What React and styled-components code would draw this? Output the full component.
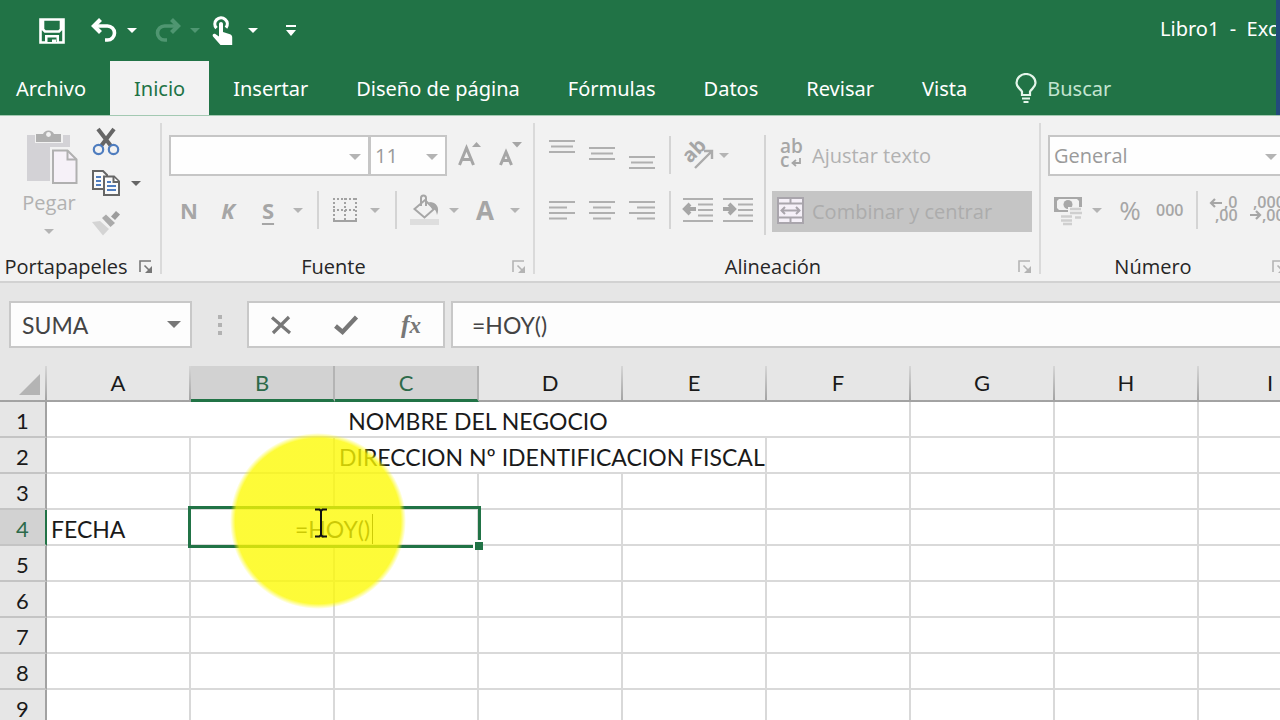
import React, { useState } from 'react';
import styled, { createGlobalStyle } from 'styled-components';

const GlobalStyle = createGlobalStyle`
  * {
    box-sizing: border-box;
  }
  body {
    margin: 0;
    background: #ffffff;
    overflow: hidden;
  }
  button, input, select {
    font-family: inherit;
    font-size: inherit;
    color: inherit;
  }
`;

const Window = styled.div`
  display: flex;
  flex-direction: column;
  height: 100vh;
  overflow: hidden;
  font-family: 'Open Sans', 'Noto Sans', sans-serif;
  font-size: 20px;
  color: #262626;
`;

const Top = styled.header`
  flex: none;
  background: #217346;
  color: #ffffff;
  border-right: 4px solid #234a7c;
  font-family: 'Noto Sans', 'Open Sans', sans-serif;
`;

const TitleBar = styled.div`
  display: flex;
  align-items: center;
  height: 61px;
  padding-left: 32px;
`;

const Title = styled.div`
  width: 116px;
  margin-left: auto;
  padding-bottom: 4px;
  overflow: hidden;
  white-space: pre;
`;

const Tool = styled.button`
  display: flex;
  flex: none;
  align-items: center;
  justify-content: center;
  width: ${(props) => props.$w || 40}px;
  height: 40px;
  margin-left: ${(props) => props.$gap || 0}px;
  padding: 0;
  border: 0;
  background: none;
  color: ${(props) => props.$color || '#a6a6a6'};
  font-size: ${(props) => (props.$big ? 26 : 22)}px;
  font-weight: ${(props) => (props.$bold ? 700 : 400)};
  font-style: ${(props) => (props.$italic ? 'italic' : 'normal')};
  text-decoration: ${(props) => (props.$underline ? 'underline' : 'none')};
  text-underline-offset: 4px;
  text-decoration-thickness: 2px;

  svg {
    overflow: visible;
  }
`;

const Tabs = styled.nav`
  display: flex;
  height: 54px;
`;

const Tab = styled.a`
  display: flex;
  align-items: center;
  justify-content: center;
  padding: 0 24px;
  background: ${(props) => (props.$active ? '#f2f2f2' : 'transparent')};
  color: ${(props) => (props.$active ? '#217346' : '#ffffff')};
  text-decoration: none;
  white-space: nowrap;

  &:first-child {
    padding-left: 16px;
  }
`;

const Search = styled.button`
  display: flex;
  align-items: center;
  gap: 10px;
  padding: 0 24px;
  border: 0;
  background: none;
  color: #c3e4d0;
`;

const Ribbon = styled.div`
  display: flex;
  flex: none;
  height: 168px;
  padding: 7px 0 7px;
  border-top: 1px solid #a3c9b2;
  border-bottom: 2px solid #d2d2d2;
  background: #f2f2f2;
  overflow: hidden;
`;

const Group = styled.section`
  display: flex;
  flex: none;
  flex-direction: column;
  justify-content: space-between;
  width: ${(props) => props.$w}px;
  border-right: 2px solid #dadada;
`;

const GroupBody = styled.div`
  display: flex;
  padding: 12px 0 0 7px;
`;

const GroupFoot = styled.div`
  display: flex;
  align-items: center;
  height: 14px;
`;

const GroupName = styled.span`
  flex: 1;
  line-height: 14px;
  text-align: center;
`;

const Launcher = styled.button`
  display: flex;
  align-items: center;
  justify-content: center;
  width: 28px;
  height: 14px;
  padding: 0;
  border: 0;
  background: none;
  color: ${(props) => (props.$dark ? '#777777' : '#b4b4b4')};
`;

const Lines = styled.div`
  display: flex;
  flex-direction: column;
  gap: 15px;
`;

const Line = styled.div`
  display: flex;
  align-items: center;
  height: 40px;
`;

const Divider = styled.span`
  display: flex;
  flex: none;
  justify-content: center;
  width: ${(props) => props.$w || 14}px;
  height: ${(props) => (props.$tall ? 100 : 38)}px;

  &::after {
    content: '';
    width: 2px;
    background: #d4d4d4;
  }
`;

const Paste = styled.button`
  display: flex;
  flex-direction: column;
  align-items: center;
  width: 82px;
  padding: 6px 0 0;
  border: 0;
  background: none;
  color: #b1b1b1;

  svg:first-child {
    margin-left: 6px;
  }
  span {
    margin: 4px 0 12px;
    line-height: 28px;
  }
`;

const ClipTools = styled.div`
  display: flex;
  flex-direction: column;
`;

const Clipboard = styled.div`
  display: flex;
  height: 120px;
  padding-left: 8px;
`;

const SelectBox = styled.label`
  position: relative;
  display: flex;
  width: ${(props) => props.$w}px;
  height: 41px;
  border: 2px solid #c6c6c6;
  background: #fefefe;
  color: #9a9a9a;

  & + & {
    margin-left: -1px;
  }
  select {
    width: 100%;
    padding: 0 4px;
    border: 0;
    background: transparent;
    appearance: none;
  }
  svg {
    position: absolute;
    top: 17px;
    right: 7px;
    pointer-events: none;
  }
`;

const WideTool = styled.button`
  display: flex;
  align-items: center;
  gap: 6px;
  width: 260px;
  height: 41px;
  padding: 0 4px;
  border: 0;
  background: ${(props) => (props.$pressed ? '#c5c5c5' : 'transparent')};
  color: ${(props) => (props.$pressed ? '#acacac' : '#b1b1b1')};

  svg {
    overflow: visible;
  }
`;

const FormulaBar = styled.div`
  display: flex;
  flex: none;
  align-items: center;
  padding: 18px 0 18px 9px;
  background: #e6e6e6;
  font-family: Lato, 'Open Sans', sans-serif;
  font-size: 23px;
  color: #444444;
`;

const Field = styled.div`
  display: flex;
  flex: ${(props) => (props.$w ? 'none' : '1')};
  align-items: center;
  width: ${(props) => (props.$w ? props.$w + 'px' : 'auto')};
  height: 47px;
  border: 2px solid #c8c8c8;
  border-right-width: ${(props) => (props.$w ? 2 : 0)}px;
  background: #fdfdfd;

  input {
    flex: 1;
    min-width: 0;
    padding: 0 0 0 ${(props) => (props.$w ? 11 : 19)}px;
    border: 0;
    outline: 0;
    background: none;
  }
`;

const Grip = styled.div`
  display: flex;
  flex-direction: column;
  align-items: center;
  gap: 4px;
  width: 55px;

  i {
    width: 4px;
    height: 4px;
    background: #b2b2b2;
  }
`;

const FxActions = styled(Field)`
  justify-content: center;
  gap: 25px;
  margin-right: 6px;
`;

const Fx = styled.span`
  font-family: 'Liberation Serif', serif;
  font-size: 26px;
  font-style: italic;
  font-weight: 700;

  small {
    font-size: 23px;
  }
`;

const Sheet = styled.main`
  position: relative;
  flex: 1;
  overflow: hidden;
  background: #ffffff;
`;

const Grid = styled.table`
  width: 1343px;
  table-layout: fixed;
  border-collapse: separate;
  border-spacing: 0;
  font-family: Lato, 'Open Sans', sans-serif;
  font-size: 23px;
  color: #1a1a1a;
`;

const ColHead = styled.th`
  width: ${(props) => props.$w || 144}px;
  height: 36px;
  padding: 0;
  border-right: 2px solid;
  border-image: linear-gradient(#d8d8d8, #a2a2a2) 1;
  border-bottom: 2px solid ${(props) => (props.$active ? '#217346' : '#a2a2a2')};
  ${(props) => props.$active && 'border-image: none; border-right-color: #b4b4b4; border-bottom-width: 3px;'}
  background: ${(props) => (props.$active ? '#d2d2d2' : '#e6e6e6')};
  color: ${(props) => (props.$active ? '#2d6a4a' : '#1a1a1a')};
  font-size: 22px;
  font-weight: 400;
  line-height: 30px;
`;

const Corner = styled(ColHead)`
  svg {
    display: block;
    margin-left: 19px;
    margin-top: 2px;
  }
`;

const RowHead = styled.th`
  height: 36px;
  padding: 4px 0 0;
  border-right: 2px solid ${(props) => (props.$active ? '#217346' : '#a2a2a2')};
  border-bottom: 2px solid #c4c4c4;
  background: ${(props) => (props.$active ? '#d2d2d2' : '#e6e6e6')};
  color: ${(props) => (props.$active ? '#2d6a4a' : '#1a1a1a')};
  font-size: 22px;
  font-weight: 400;
  line-height: 30px;
`;

const Cell = styled.td`
  position: relative;
  height: 36px;
  padding: 4px 4px 0;
  border-right: 2px solid #d9d9d9;
  border-bottom: 2px solid #d9d9d9;
  line-height: 30px;
  text-align: ${(props) => (props.$center ? 'center' : 'left')};
  white-space: nowrap;
`;

const Selection = styled.div`
  position: absolute;
  z-index: 1;
  inset: -4px -4px -4px -3px;
  border: 3px solid #217346;

  &::after {
    content: '';
    position: absolute;
    right: -5px;
    bottom: -5px;
    width: 8px;
    height: 8px;
    border-top: 2px solid #ffffff;
    border-left: 2px solid #ffffff;
    box-sizing: content-box;
    background: #217346;
  }
`;

const Caret = styled.span`
  display: inline-block;
  width: 1px;
  height: 30px;
  margin-left: 2px;
  background: #222222;
  vertical-align: top;
`;

const Spotlight = styled.div`
  position: absolute;
  z-index: 2;
  top: 67px;
  left: 230px;
  width: 176px;
  height: 176px;
  border-radius: 50%;
  background: radial-gradient(circle closest-side, rgba(253, 250, 0, 0.78) 94%, rgba(253, 250, 0, 0) 100%);
  pointer-events: none;
`;

const Pointer = styled.svg`
  position: absolute;
  z-index: 3;
  top: 142px;
  left: 314px;
  pointer-events: none;
`;

const Down = ({ color = '#b4b4b4', w = 12 }) => (
  <svg width={w} height={w / 2} viewBox="0 0 12 6" fill={color}>
    <path d="M0 0h12L6 6z" />
  </svg>
);

const SaveIcon = () => (
  <svg width="26" height="26" viewBox="0 0 26 26" fill="none" stroke="#fff" strokeWidth="2.6">
    <path d="M1.500 1.500h23v23h-23zM4 2v9.500l2 2h14l2-2V2" />
    <path d="M6 17h14v7H6z" fill="#fff" stroke="none" />
    <path d="M8.500 19.500h9V24h-9z" fill="#217346" stroke="none" />
    <path d="M13 21.500h4V24h-4z" fill="#fff" stroke="none" />
  </svg>
);

const UndoIcon = ({ flip, color }) => (
  <svg width="28" height="26" viewBox="0 0 28 26" fill="none" stroke={color} strokeWidth="3.600">
    <g transform={flip ? 'translate(28 0) scale(-1 1)' : undefined}>
      <path d="M3 8h14.500a6.800 6.800 0 0 1 0 14H15" />
      <path d="M10.500 1.500L4 8l6.500 6.500" strokeWidth="4.200" />
    </g>
  </svg>
);

const TouchIcon = () => (
  <svg width="22" height="30" viewBox="0 0 22 30">
    <path d="M4.500 12.200a6.200 6.200 0 1 1 9.500-.4" fill="none" stroke="#fff" strokeWidth="3.200" />
    <path
      d="M7 8c0-2.700 4-2.700 4 0v8l7 2.200c1.500.5 2.200 1.500 2.200 3V29H8.500L1 20.500c-1.200-2 1-3.500 2.700-2.200L7 20.500z"
      fill="#fff"
    />
  </svg>
);

const BulbIcon = () => (
  <svg width="22" height="31" viewBox="0 0 22 31" fill="none" stroke="#e4f5ea" strokeWidth="2.200">
    <path d="M7 22v-3.500C5 15.500 1.500 14 1.500 10a9.500 9 0 0 1 19 0c0 4-3.500 5.500-5.500 8.500V22z" />
    <path d="M7 25.500h8M8.500 29h5" />
  </svg>
);

const PasteIcon = () => (
  <svg width="52" height="56" viewBox="0 0 52 56">
    <path d="M1 6h43v46H1z" fill="#d3d2d6" />
    <path d="M9 6h28v8H9z" fill="#f2f2f2" />
    <path d="M10 5h7a6 6 0 0 1 11 0h7v8H10z" fill="#b0b0b0" />
    <circle cx="22.500" cy="5.500" r="2.400" fill="#f2f2f2" />
    <path d="M24 18h20l9 9v29H24z" fill="#f2f2f2" />
    <path d="M27 21.500h14.500l9 9V54H27z" fill="#f6f1f8" stroke="#b0b0b0" strokeWidth="2" />
    <path d="M41.500 21.500v9h9" fill="none" stroke="#b0b0b0" strokeWidth="2" />
  </svg>
);

const CutIcon = () => (
  <svg width="28" height="28" viewBox="0 0 28 28" fill="none">
    <path d="M6 0l13 17M22 0L9 17" stroke="#666666" strokeWidth="4" />
    <circle cx="6.500" cy="20.500" r="4.700" stroke="#4f7dbf" strokeWidth="2.200" />
    <circle cx="21.500" cy="20.500" r="4.700" stroke="#4f7dbf" strokeWidth="2.200" />
  </svg>
);

const CopyIcon = () => (
  <svg width="28" height="26" viewBox="0 0 28 26" fill="#fafafa" stroke="#666666" strokeWidth="2">
    <path d="M1 1h10l4 4v14H1z" />
    <path d="M4 7h5M4 11h5M4 15h5" stroke="#4f7dbf" />
    <path d="M12 6.500h10l5 5V25H12z" />
    <path d="M21.500 7v5H27" />
    <path d="M15 12h4M15 16h9M15 20h9" stroke="#4f7dbf" />
  </svg>
);

const BrushIcon = () => (
  <svg width="28" height="26" viewBox="0 0 28 26">
    <path d="M0 12l8-1 9 8-6 6.500z" fill="#d4d4d4" />
    <path d="M10 8l4-3.500 9 8.500-4.500 4z" fill="#aaaaaa" />
    <path d="M19 6.500l5-5.500 4 3.500-5 5.500z" fill="#9c9c9c" />
  </svg>
);

const LauncherIcon = () => (
  <svg width="14" height="14" viewBox="0 0 14 14" fill="none" stroke="currentColor" strokeWidth="1.600">
    <path d="M1 12V1h11M5.500 5.500l5 5" />
    <path d="M13 6v7H6z" fill="currentColor" stroke="none" />
  </svg>
);

const GrowIcon = ({ down }) => (
  <svg width="26" height="30" viewBox="0 0 26 30" fill="#a6a6a6">
    {down ? <path d="M15 2h10l-5 5.500z" /> : <path d="M15 7h9l-4.500-5z" />}
    {down ? (
      <path d="M3.500 25L9 12l5.500 13M5.500 20.500h7" fill="none" stroke="#a6a6a6" strokeWidth="3" />
    ) : (
      <path d="M2.500 25L9.500 8l7 17M5 19.500h9" fill="none" stroke="#a6a6a6" strokeWidth="3" />
    )}
  </svg>
);

const BordersIcon = () => (
  <svg width="26" height="26" viewBox="0 0 26 26" fill="none" stroke="#a2a2a2" strokeWidth="2">
    <path d="M1 2h24M1 13h24M2 1v22M13 1v22M24 1v22" strokeDasharray="2 2" />
    <path d="M1 24h24" stroke="#a2a2a2" />
  </svg>
);

const BucketIcon = () => (
  <svg width="30" height="30" viewBox="0 0 30 30" fill="none" stroke="#a6a6a6" strokeWidth="2">
    <path d="M4.500 14L15 5l9 9-9.500 8.500zM11 11V3a2.500 2.500 0 0 1 5 0v8" />
    <path d="M19 7c8 0 11 6 8 13-1-5-2-6-5-6z" fill="#a6a6a6" stroke="none" />
    <path d="M0 24h29v6H0z" fill="#dedede" stroke="none" />
  </svg>
);

// each entry is [x1, x2] of one stroke
const StrokeIcon = ({ rows, top, step = 5.5 }) => (
  <svg width="26" height="40" viewBox="0 0 26 40" stroke="#b0b0b0" strokeWidth="2">
    {rows.map(([a, b], i) => (
      <path key={i} d={`M${a} ${top + i * step}H${b}`} />
    ))}
  </svg>
);

const threeRows = [[0, 26], [2, 24], [0, 26]];

const OrientIcon = () => (
  <svg width="32" height="32" viewBox="0 0 32 32" fill="none" stroke="#ababab" strokeWidth="2.400">
    <text
      x="8"
      y="25"
      transform="rotate(-45 8 25)"
      fill="#a6a6a6"
      stroke="none"
      fontFamily="Open Sans"
      fontWeight="700"
      fontSize="20"
    >
      ab
    </text>
    <path d="M13 29l16-16M22 12h8v8" />
  </svg>
);

const IndentIcon = ({ right }) => (
  <svg width="30" height="28" viewBox="0 0 30 28" fill="none" stroke="#b0b0b0" strokeWidth="2">
    <path d="M0 3h30M15 8.500h15M15 14h15M15 19.500h15M0 25h30" />
    {right ? (
      <path d="M0 13h11M6 8l5 5-5 5" stroke="#a6a6a6" strokeWidth="4" />
    ) : (
      <path d="M13 13H2M7 8l-5 5 5 5" stroke="#a6a6a6" strokeWidth="4" />
    )}
  </svg>
);

const WrapIcon = () => (
  <svg width="30" height="32" viewBox="0 0 30 32" fill="#a6a6a6" fontFamily="Open Sans" fontWeight="600">
    <text x="4" y="13" fontSize="19">ab</text>
    <text x="4" y="27" fontSize="19">c</text>
    <path d="M24 18v5h-7M20 20l-3.500 3 3.500 3" fill="none" stroke="#a6a6a6" strokeWidth="1.800" />
  </svg>
);

const MergeIcon = () => (
  <svg width="30" height="28" viewBox="0 0 30 28" fill="#f5f0f8" stroke="#a9a5ac" strokeWidth="2">
    <path d="M2 0h25v25H2zM2 5.500h25M2 19.500h25M14.500 0v5.500M14.500 19.500V25" />
    <path d="M5.500 12.500h18M9 9l-3.500 3.500L9 16M20 9l3.500 3.500L20 16" fill="none" />
  </svg>
);

const MoneyIcon = () => (
  <svg width="30" height="30" viewBox="0 0 30 30">
    <path d="M1 2h28v15H1z" fill="#a8a8a8" />
    <path d="M6 4h18l2 2v7l-2 2H6l-2-2V6z" fill="#f2f2f2" />
    <circle cx="15" cy="9.500" r="4.500" fill="#a8a8a8" />
    <path d="M15 12h15v17H6v-9h9z" fill="#f2f2f2" />
    <path d="M17 14h11M17 18h12M8 21.500h11M22 22.500h6M8 25.500h11M10 29h9" stroke="#cfcfcf" strokeWidth="2.400" />
  </svg>
);

const DecimalIcon = ({ less }) => (
  <svg width="32" height="30" viewBox="0 0 32 30" fill="#a6a6a6" fontFamily="Open Sans" fontSize="16" fontWeight="600">
    <text x={less ? 3 : 15} y="13">{less ? ',000' : ',0'}</text>
    <text x={less ? 12 : 6} y="26">,00</text>
    {less ? (
      <path d="M0 20h10M6 16l4 4-4 4" fill="none" stroke="#a6a6a6" strokeWidth="2.200" />
    ) : (
      <path d="M13 8H2M6 4L2 8l4 4" fill="none" stroke="#a6a6a6" strokeWidth="2.200" />
    )}
  </svg>
);

const tabs = ['Archivo', 'Inicio', 'Insertar', 'Diseño de página', 'Fórmulas', 'Datos', 'Revisar', 'Vista'];
const columns = ['A', 'B', 'C', 'D', 'E', 'F', 'G', 'H', 'I'];
const rows = [1, 2, 3, 4, 5, 6, 7, 8, 9];

// cells that hold text or span more than one column, by row
const content = {
  1: [{ span: 6, text: 'NOMBRE DEL NEGOCIO', center: true }],
  2: [{}, {}, { span: 3, text: 'DIRECCION Nº IDENTIFICACION FISCAL', center: true }],
  4: [{ text: 'FECHA' }, { span: 2, center: true, editing: true }],
};

function getCells(row) {
  const cells = [...(content[row] || [])];
  let used = cells.reduce((sum, cell) => sum + (cell.span || 1), 0);
  while (used < columns.length) {
    cells.push({});
    used += 1;
  }
  return cells;
}

function RibbonGroup({ name, width, children }) {
  return (
    <Group $w={width}>
      <GroupBody>{children}</GroupBody>
      <GroupFoot>
        <GroupName>{name}</GroupName>
        <Launcher aria-label={name}><LauncherIcon /></Launcher>
      </GroupFoot>
    </Group>
  );
}

export default function App() {
  const [formula, setFormula] = useState('=HOY()');
  const [cellName, setCellName] = useState('SUMA');

  return (
    <Window>
      <GlobalStyle />
      <Top>
        <TitleBar>
          <Tool aria-label="Guardar"><SaveIcon /></Tool>
          <Tool $gap={12} aria-label="Deshacer"><UndoIcon color="#fff" /></Tool>
          <Tool $w={16} aria-label="Lista deshacer"><Down color="#fff" w={10} /></Tool>
          <Tool $w={34} $gap={11} aria-label="Rehacer"><UndoIcon flip color="#4f9671" /></Tool>
          <Tool $w={16} $gap={2} aria-label="Lista rehacer"><Down color="#4f9671" w={10} /></Tool>
          <Tool $w={32} $gap={4} aria-label="Modo táctil"><TouchIcon /></Tool>
          <Tool $w={16} $gap={6} aria-label="Lista modo"><Down color="#fff" w={10} /></Tool>
          <Tool $w={30} $gap={15} aria-label="Personalizar">
            <svg width="10" height="12" viewBox="0 0 10 12" fill="#fff">
              <path d="M0 0h10v2H0zM0 5h10l-5 6z" />
            </svg>
          </Tool>
          <Title>Libro1  -  Excel</Title>
        </TitleBar>
        <Tabs>
          {tabs.map((tab) => (
            <Tab key={tab} href="#" $active={tab === 'Inicio'}>{tab}</Tab>
          ))}
          <Search><BulbIcon />Buscar</Search>
        </Tabs>
      </Top>

      <Ribbon>
        <Group $w={162}>
          <Clipboard>
            <Paste>
              <PasteIcon />
              <span>Pegar</span>
              <Down w={10} />
            </Paste>
            <ClipTools>
              <Tool $w={32} aria-label="Cortar"><CutIcon /></Tool>
              <Line>
                <Tool $w={32} aria-label="Copiar"><CopyIcon /></Tool>
                <Tool $w={28} aria-label="Opciones de copia"><Down color="#666666" w={10} /></Tool>
              </Line>
              <Tool $w={32} aria-label="Copiar formato"><BrushIcon /></Tool>
            </ClipTools>
          </Clipboard>
          <GroupFoot>
            <GroupName>Portapapeles</GroupName>
            <Launcher $dark aria-label="Portapapeles"><LauncherIcon /></Launcher>
          </GroupFoot>
        </Group>

        <RibbonGroup name="Fuente" width={373}>
          <Lines>
            <Line>
              <SelectBox $w={201}>
                <select aria-label="Fuente"><option></option></select>
                <Down />
              </SelectBox>
              <SelectBox $w={78}>
                <select aria-label="Tamaño"><option>11</option></select>
                <Down />
              </SelectBox>
              <Tool $w={46} aria-label="Aumentar"><GrowIcon /></Tool>
              <Tool $w={34} aria-label="Disminuir"><GrowIcon down /></Tool>
            </Line>
            <Line>
              <Tool $w={40} $bold>N</Tool>
              <Tool $w={38} $bold $italic>K</Tool>
              <Tool $w={42} $bold $underline>S</Tool>
              <Tool $w={18} aria-label="Subrayado"><Down w={10} /></Tool>
              <Divider $w={22} />
              <Tool $w={32} aria-label="Bordes"><BordersIcon /></Tool>
              <Tool $w={28} aria-label="Lista bordes"><Down w={10} /></Tool>
              <Divider />
              <Tool $w={44} aria-label="Relleno"><BucketIcon /></Tool>
              <Tool $w={14} aria-label="Lista relleno"><Down w={10} /></Tool>
              <Tool $w={48} $bold $big>A</Tool>
              <Tool $w={12} aria-label="Lista color"><Down w={10} /></Tool>
            </Line>
          </Lines>
        </RibbonGroup>

        <RibbonGroup name="Alineación" width={506}>
          <Lines>
            <Line>
              <Tool aria-label="Arriba"><StrokeIcon rows={threeRows} top={6} /></Tool>
              <Tool aria-label="Medio"><StrokeIcon rows={threeRows} top={13} /></Tool>
              <Tool aria-label="Abajo"><StrokeIcon rows={threeRows} top={22} /></Tool>
              <Divider $w={16} />
              <Tool aria-label="Orientación"><OrientIcon /></Tool>
              <Tool $w={12} aria-label="Lista orientación"><Down w={10} /></Tool>
            </Line>
            <Line>
              <Tool aria-label="Izquierda"><StrokeIcon rows={[[0, 26], [0, 18], [0, 26], [0, 18]]} top={12} /></Tool>
              <Tool aria-label="Centro"><StrokeIcon rows={[[0, 26], [4, 22], [0, 26], [4, 22]]} top={12} /></Tool>
              <Tool aria-label="Derecha"><StrokeIcon rows={[[0, 26], [8, 26], [0, 26], [8, 26]]} top={12} /></Tool>
              <Divider $w={16} />
              <Tool aria-label="Disminuir sangría"><IndentIcon /></Tool>
              <Tool aria-label="Aumentar sangría"><IndentIcon right /></Tool>
            </Line>
          </Lines>
          <Divider $tall />
          <Lines>
            <WideTool><WrapIcon />Ajustar texto</WideTool>
            <WideTool $pressed><MergeIcon />Combinar y centrar</WideTool>
          </Lines>
        </RibbonGroup>

        <RibbonGroup name="Número" width={254}>
          <Lines>
            <Line>
              <SelectBox $w={238}>
                <select aria-label="Formato"><option>General</option></select>
                <Down />
              </SelectBox>
            </Line>
            <Line>
              <Tool aria-label="Moneda"><MoneyIcon /></Tool>
              <Tool $w={18} aria-label="Lista moneda"><Down w={10} /></Tool>
              <Tool $w={48} $big>%</Tool>
              <Tool $w={30} aria-label="Millares">
                <svg width="30" height="20" viewBox="0 0 30 20">
                  <text x="2" y="16" fill="#a6a6a6" fontFamily="Open Sans" fontSize="16" fontWeight="600">000</text>
                </svg>
              </Tool>
              <Divider $w={26} />
              <Tool $w={30} aria-label="Aumentar decimales"><DecimalIcon /></Tool>
              <Tool $w={52} aria-label="Disminuir decimales"><DecimalIcon less /></Tool>
            </Line>
          </Lines>
        </RibbonGroup>
      </Ribbon>

      <FormulaBar>
        <Field $w={183}>
          <input aria-label="Cuadro de nombres" value={cellName} onChange={(e) => setCellName(e.target.value)} />
          <Tool $w={32} aria-label="Lista de nombres"><Down color="#777777" w={14} /></Tool>
        </Field>
        <Grip><i /><i /><i /></Grip>
        <FxActions $w={198}>
          <Tool aria-label="Cancelar">
            <svg width="20" height="18" viewBox="0 0 20 18" stroke="#777777" strokeWidth="3.200">
              <path d="M1 1.500l18 15.500M18 1L2 17" />
            </svg>
          </Tool>
          <Tool aria-label="Introducir">
            <svg width="24" height="20" viewBox="0 0 24 20" fill="none" stroke="#777777" strokeWidth="4.400">
              <path d="M1.500 11l7 6L22.500 2" />
            </svg>
          </Tool>
          <Tool $color="#777777"><Fx>f<small>x</small></Fx></Tool>
        </FxActions>
        <Field>
          <input aria-label="Barra de fórmulas" value={formula} onChange={(e) => setFormula(e.target.value)} />
        </Field>
      </FormulaBar>

      <Sheet>
        <Grid>
          <thead>
            <tr>
              <Corner $w={47}>
                <svg width="21" height="21" viewBox="0 0 21 21" fill="#b4b4b4"><path d="M21 0v21H0z" /></svg>
              </Corner>
              {columns.map((name) => (
                <ColHead key={name} $active={name === 'B' || name === 'C'}>{name}</ColHead>
              ))}
            </tr>
          </thead>
          <tbody>
            {rows.map((row) => (
              <tr key={row}>
                <RowHead $active={row === 4}>{row}</RowHead>
                {getCells(row).map((cell, i) => (
                  <Cell key={i} colSpan={cell.span || 1} $center={cell.center}>
                    {cell.editing ? formula : cell.text}
                    {cell.editing && <Caret />}
                    {cell.editing && <Selection />}
                  </Cell>
                ))}
              </tr>
            ))}
          </tbody>
        </Grid>
        <Spotlight />
        <Pointer width="14" height="30" viewBox="0 0 14 30" fill="none" stroke="#111" strokeWidth="2">
          <path d="M1 1.500h4.500L7 3l1.500-1.500H13M7 3v24M1 28.500h4.500L7 27l1.500 1.500H13" />
        </Pointer>
      </Sheet>
    </Window>
  );
}
